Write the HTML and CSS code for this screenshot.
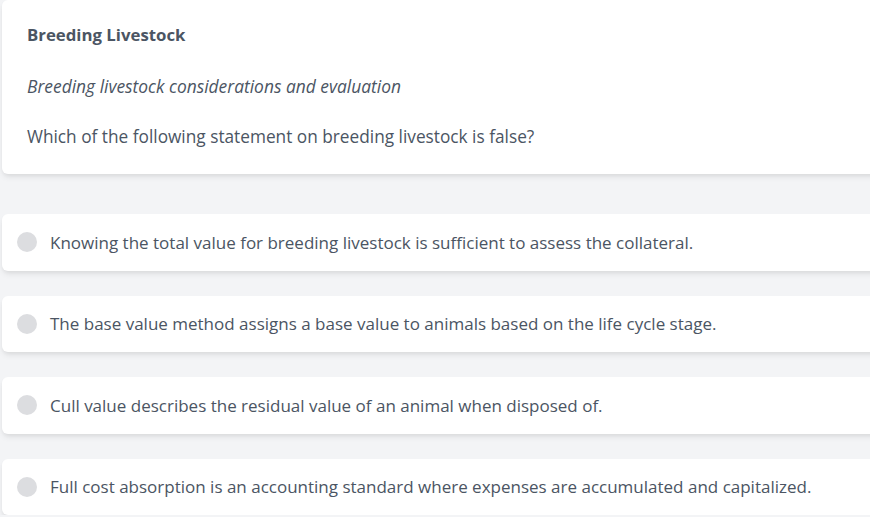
FILE: index.html
```html
<!DOCTYPE html>
<html>
<head>
<meta charset="utf-8">
<link rel="stylesheet" href="styles.css">
</head>
<body>
<div class="page">
  <div class="card question-card">
    <div class="title">Breeding Livestock</div>
    <div class="subtitle">Breeding livestock considerations and evaluation</div>
    <div class="question">Which of the following statement on breeding livestock is false?</div>
  </div>
  <div class="options">
    <div class="card option"><span class="radio"></span><span class="label">Knowing the total value for breeding livestock is sufficient to assess the collateral.</span></div>
    <div class="card option"><span class="radio"></span><span class="label">The base value method assigns a base value to animals based on the life cycle stage.</span></div>
    <div class="card option"><span class="radio"></span><span class="label">Cull value describes the residual value of an animal when disposed of.</span></div>
    <div class="card option"><span class="radio"></span><span class="label">Full cost absorption is an accounting standard where expenses are accumulated and capitalized.</span></div>
  </div>
</div>
</body>
</html>
```
FILE: styles.css
```css
html, body {
  margin: 0;
  padding: 0;
  background: #f3f4f6;
  overflow: hidden;
}
body {
  font-family: "Open Sans", "Noto Sans", sans-serif;
  color: #4b5563;
  font-size: 17px;
}
.page {
  margin-left: 2px;
  width: 900px;
}
.card {
  background: #fff;
  border-radius: 6px;
  box-shadow: 0 4px 6px -1px rgba(0,0,0,0.08), 0 2px 4px -1px rgba(0,0,0,0.05);
}
.question-card {
  padding: 23px 25px 25px;
  height: 126px;
  display: flex;
  flex-direction: column;
  gap: 27px;
}
.title, .subtitle, .question {
  line-height: 24px;
  height: 24px;
  white-space: nowrap;
}
.title {
  font-weight: 700;
  font-size: 16.8px;
}
.subtitle {
  font-style: italic;
  font-size: 17.4px;
}
.question {
  font-size: 17.25px;
}
.options {
  margin-top: 40px;
  display: flex;
  flex-direction: column;
  gap: 25px;
}
.option {
  height: 56.5px;
  display: flex;
  align-items: center;
  padding-left: 15px;
  gap: 13px;
}
.radio {
  width: 20px;
  height: 20px;
  border-radius: 50%;
  background: #dcdde0;
  flex: none;
}
.label {
  white-space: nowrap;
}
```
